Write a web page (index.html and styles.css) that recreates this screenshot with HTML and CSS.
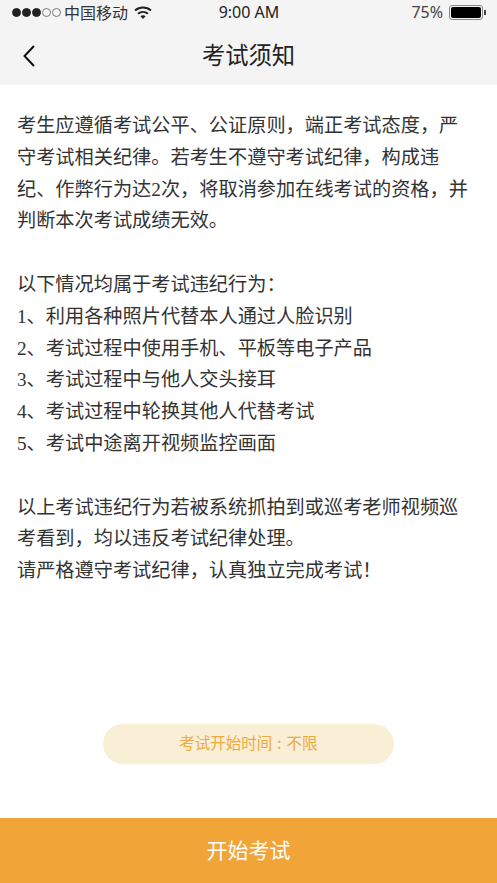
FILE: index.html
```html
<!DOCTYPE html>
<html lang="zh-CN">
<head>
  <meta charset="UTF-8">
  <title>考试须知</title>
  <link rel="stylesheet" href="styles.css">
</head>
<body>
  <div class="page">
    <div class="top">
      <div class="status-bar">
        <div class="status-left">
          <span class="signal">
            <i class="dot on"></i><i class="dot on"></i><i class="dot on"></i><i class="dot"></i><i class="dot"></i>
          </span>
          <span class="carrier">中国移动</span>
          <svg class="wifi" width="18" height="13" viewBox="0 0 18 13">
            <path d="M1 4.6C5.6 .6 12.4 .6 17 4.6" fill="none" stroke="#222" stroke-width="2"/>
            <path d="M4 7.8C6.9 5.3 11.1 5.3 14 7.8" fill="none" stroke="#222" stroke-width="2"/>
            <path d="M6.4 10.2C7.9 9 10.1 9 11.6 10.2L9 13Z" fill="#222"/>
          </svg>
        </div>
        <div class="status-time">9:00 AM</div>
        <div class="status-right">
          <span class="percent">75%</span>
          <span class="battery"><span class="battery-fill"></span></span>
          <span class="battery-tip"></span>
        </div>
      </div>
      <div class="nav-bar">
        <svg class="back" width="14" height="24" viewBox="0 0 14 24">
          <path d="M12 2L2.5 12L12 22" fill="none" stroke="#111" stroke-width="2"/>
        </svg>
        <h1>考试须知</h1>
      </div>
    </div>

    <div class="content">
      <p>考生应遵循考试公平、公证原则，端正考试态度，严<br>守考试相关纪律。若考生不遵守考试纪律，构成违<br>纪、作弊行为达2次，将取消参加在线考试的资格，并<br>判断本次考试成绩无效。</p>
      <p>以下情况均属于考试违纪行为：<br>1、利用各种照片代替本人通过人脸识别<br>2、考试过程中使用手机、平板等电子产品<br>3、考试过程中与他人交头接耳<br>4、考试过程中轮换其他人代替考试<br>5、考试中途离开视频监控画面</p>
      <p>以上考试违纪行为若被系统抓拍到或巡考老师视频巡<br>考看到，均以违反考试纪律处理。<br>请严格遵守考试纪律，认真独立完成考试！</p>
    </div>

    <div class="start-time">考试开始时间 : 不限</div>
    <div class="start-btn">开始考试</div>
  </div>
</body>
</html>
```

FILE: styles.css
```css
html, body {
  margin: 0;
  padding: 0;
  background: #fff;
}
.page {
  width: 497px;
  height: 883px;
  display: flex;
  flex-direction: column;
  overflow: hidden;
  font-family: "Liberation Serif", "Noto Sans CJK SC", serif;
}
.top {
  background: #f4f4f4;
  height: 85px;
}
.status-bar {
  height: 25px;
  box-sizing: border-box;
  display: grid;
  grid-template-columns: 1fr auto 1fr;
  align-items: center;
  padding: 0 11px 1px 12px;
  font-family: "Noto Sans CJK SC", "Noto Sans", sans-serif;
  font-size: 16px;
  line-height: 22px;
  color: #333;
}
.status-left {
  display: flex;
  align-items: center;
}
.signal {
  display: flex;
  gap: 1px;
  margin-right: 3px;
}
.dot {
  width: 9px;
  height: 9px;
  border: 1px solid #777;
  border-radius: 50%;
  box-sizing: border-box;
}
.dot.on {
  background: #222;
  border-color: #222;
}
.wifi {
  margin-left: 6px;
}
.status-time {
  font-family: "Noto Sans", sans-serif;
  font-size: 16px;
  color: #222;
}
.status-right {
  display: flex;
  align-items: center;
  justify-content: flex-end;
}
.percent {
  font-family: "Noto Sans", sans-serif;
  font-size: 16px;
  color: #444;
  margin-right: 6px;
}
.battery {
  width: 34px;
  height: 15px;
  box-sizing: border-box;
  border: 1px solid #888;
  border-radius: 3px;
  padding: 1px;
  display: flex;
}
.battery-fill {
  flex: 1;
  background: #000;
  border-radius: 2px;
}
.battery-tip {
  width: 2px;
  height: 5px;
  background: #444;
  margin-left: 1px;
}
.nav-bar {
  height: 60px;
  position: relative;
  display: flex;
  align-items: center;
  justify-content: center;
}
.nav-bar h1 {
  margin: 0 0 2px;
  font-family: "Noto Sans CJK SC", sans-serif;
  font-size: 23.3px;
  font-weight: 400;
  color: #222;
}
.back {
  position: absolute;
  left: 22px;
  top: 19px;
}
.content {
  flex: 1;
  padding: 25px 0 0 17px;
  font-size: 19.2px;
  line-height: 31.8px;
  color: #333;
  white-space: nowrap;
}
.content p {
  margin: 0 0 31.8px;
}
.start-time {
  width: 291px;
  height: 40px;
  box-sizing: border-box;
  padding-bottom: 3px;
  margin: 0 auto 54px;
  border-radius: 20px;
  background: #f9eed6;
  color: #efa93f;
  font-family: "Noto Sans CJK SC", sans-serif;
  font-size: 15.5px;
  line-height: 37px;
  word-spacing: 1.5px;
  text-align: center;
}
.start-btn {
  height: 65px;
  box-sizing: border-box;
  padding-bottom: 3px;
  background: #f1a539;
  color: #fff;
  font-family: "Noto Sans CJK SC", sans-serif;
  font-size: 21px;
  line-height: 62px;
  text-align: center;
}
```
